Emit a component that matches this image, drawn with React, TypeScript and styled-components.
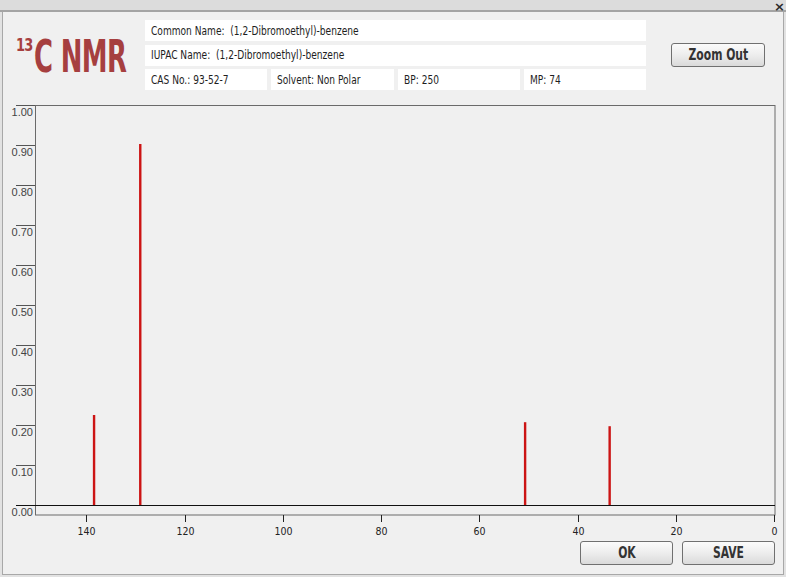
import React from "react";
import styled, { createGlobalStyle } from "styled-components";

const GlobalStyle = createGlobalStyle`
  html, body { margin: 0; padding: 0; background: #f0f0f0; }
  body { width: 786px; height: 577px; overflow: hidden; font-family: "DejaVu Sans Condensed", "DejaVu Sans", sans-serif; }
`;

const CONDENSED = `"DejaVu Sans Condensed", "Liberation Sans Narrow", "DejaVu Sans", sans-serif`;

const Page = styled.div`
  width: 786px;
  height: 577px;
  display: flex;
  flex-direction: column;
  background: #e2e2e2;
`;

const TitleStrip = styled.div`
  height: 10px;
  background: #dcdcdc;
  border-bottom: 2px solid #a4a4a4;
  display: flex;
  justify-content: flex-end;
  align-items: center;
  padding-right: 1px;
`;

const CloseGlyph = styled.span`
  font-family: "DejaVu Sans", sans-serif;
  font-weight: bold;
  font-size: 13px;
  line-height: 10px;
  color: #2a2a2a;
  margin-top: 3px;
`;

const Window = styled.div`
  margin: 0 2px;
  height: 562px;
  border: 1px solid #a8a8a8;
  border-top: none;
  background: #f0f0f0;
  display: flex;
  flex-direction: column;
`;

const Header = styled.div`
  height: 83px;
  box-sizing: border-box;
  padding: 8px 0 0 13px;
  display: flex;
  align-items: flex-start;
`;

const Logo = styled.div`
  width: 129px;
  margin-top: 17px;
  display: flex;
  align-items: flex-start;
  color: #a63f3f;
  font-family: ${CONDENSED};
  font-weight: bold;
`;

const LogoSup = styled.span`
  font-size: 17px;
  line-height: 17px;
  letter-spacing: -1px;
  display: inline-block;
  transform: scaleX(0.85);
  transform-origin: left center;
  width: 18px;
`;

const LogoMain = styled.span`
  font-size: 45px;
  line-height: 40px;
  letter-spacing: -1px;
  display: inline-block;
  transform: scaleX(0.64);
  transform-origin: left center;
  white-space: nowrap;
`;

const Fields = styled.div`
  width: 501px;
  display: grid;
  grid-template-columns: repeat(4, 1fr);
  grid-auto-rows: 21px;
  row-gap: 3.5px;
  column-gap: 4px;
`;

const Field = styled.div<{ $span?: number }>`
  grid-column: span ${(p) => p.$span ?? 1};
  background: #ffffff;
  display: flex;
  align-items: center;
  padding-left: 6px;
  overflow: hidden;
`;

const FieldText = styled.span`
  font-family: ${CONDENSED};
  font-size: 12px;
  color: #1e1e1e;
  white-space: pre;
  display: inline-block;
  transform: scaleX(0.84);
  transform-origin: left center;
`;

const Btn = styled.button<{ $w: number }>`
  width: ${(p) => p.$w}px;
  height: 24px;
  box-sizing: border-box;
  border: 1px solid #707070;
  border-radius: 3px;
  background: linear-gradient(#fbfbfb 0%, #ededed 50%, #dadada 100%);
  padding: 0;
  cursor: default;
  display: flex;
  align-items: center;
  justify-content: center;
`;

const BtnLabel = styled.span`
  font-family: ${CONDENSED};
  font-weight: bold;
  font-size: 15px;
  color: #333;
  display: inline-block;
  transform: scaleX(0.8);
  white-space: nowrap;
`;

const ZoomWrap = styled.div`
  margin-left: 25px;
  margin-top: 23px;
`;

const ChartSvg = styled.svg`
  display: block;
  width: 780px;
  height: 446px;
`;

const Footer = styled.div`
  display: flex;
  justify-content: flex-end;
  gap: 9px;
  padding-right: 8px;
`;

const peaks = [
  { ppm: 138.4, h: 0.225 },
  { ppm: 129.0, h: 0.9025 },
  { ppm: 50.7, h: 0.207 },
  { ppm: 33.5, h: 0.197 },
];

const X0 = 774.3;
const PX_PER_PPM = 98.3 / 20;
const xOf = (ppm: number) => X0 - ppm * PX_PER_PPM;
const BASE = 505;
const yOf = (v: number) => BASE - v * 400;

function Chart() {
  const yTicks = [1, 0.9, 0.8, 0.7, 0.6, 0.5, 0.4, 0.3, 0.2, 0.1, 0];
  const xTicks = [140, 120, 100, 80, 60, 40, 20, 0];
  return (
    <ChartSvg viewBox="3 95 780 446">
      <rect x={35.5} y={105.5} width={739.5} height={409.5} fill="#f0f0f0" stroke="#6a6a6a" strokeWidth={1} />
      {yTicks.map((v) => {
        const y = Math.round(yOf(v)) + 0.5;
        return (
          <g key={v}>
            {v !== 0 && <line x1={16} x2={35} y1={y} y2={y} stroke="#555" strokeWidth={1} />}
            <text
              x={33}
              y={y + 10}
              textAnchor="end"
              fontFamily="Liberation Sans, Arial, sans-serif"
              fontSize={11}
              fill="#444"
            >
              {v.toFixed(2)}
            </text>
          </g>
        );
      })}
      {xTicks.map((p) => {
        const x = Math.round(xOf(p)) + 0.5;
        return (
          <g key={p}>
            <line x1={x} x2={x} y1={515} y2={522} stroke="#222" strokeWidth={1} />
            <text
              x={x}
              y={535}
              textAnchor="middle"
              fontFamily={CONDENSED}
              fontSize={10.5}
              fill="#222"
            >
              {p}
            </text>
          </g>
        );
      })}
      {peaks.map((pk) => (
        <line
          key={pk.ppm}
          x1={xOf(pk.ppm)}
          x2={xOf(pk.ppm)}
          y1={BASE}
          y2={yOf(pk.h)}
          stroke="#cc1414"
          strokeWidth={2.4}
        />
      ))}
      <line x1={16} x2={775} y1={BASE + 0.5} y2={BASE + 0.5} stroke="#111" strokeWidth={1.2} />
    </ChartSvg>
  );
}

export default function App() {
  return (
    <>
      <GlobalStyle />
      <Page>
        <TitleStrip>
          <CloseGlyph>×</CloseGlyph>
        </TitleStrip>
        <Window>
          <Header>
            <Logo>
              <LogoSup>13</LogoSup>
              <LogoMain>C NMR</LogoMain>
            </Logo>
            <Fields>
              <Field $span={4}>
                <FieldText>{"Common Name:  (1,2-Dibromoethyl)-benzene"}</FieldText>
              </Field>
              <Field $span={4}>
                <FieldText>{"IUPAC Name:  (1,2-Dibromoethyl)-benzene"}</FieldText>
              </Field>
              <Field>
                <FieldText>CAS No.: 93-52-7</FieldText>
              </Field>
              <Field>
                <FieldText>Solvent: Non Polar</FieldText>
              </Field>
              <Field>
                <FieldText>BP: 250</FieldText>
              </Field>
              <Field>
                <FieldText>MP: 74</FieldText>
              </Field>
            </Fields>
            <ZoomWrap>
              <Btn $w={94}>
                <BtnLabel>Zoom Out</BtnLabel>
              </Btn>
            </ZoomWrap>
          </Header>
          <Chart />
          <Footer>
            <Btn $w={93}>
              <BtnLabel>OK</BtnLabel>
            </Btn>
            <Btn $w={93}>
              <BtnLabel>SAVE</BtnLabel>
            </Btn>
          </Footer>
        </Window>
      </Page>
    </>
  );
}
